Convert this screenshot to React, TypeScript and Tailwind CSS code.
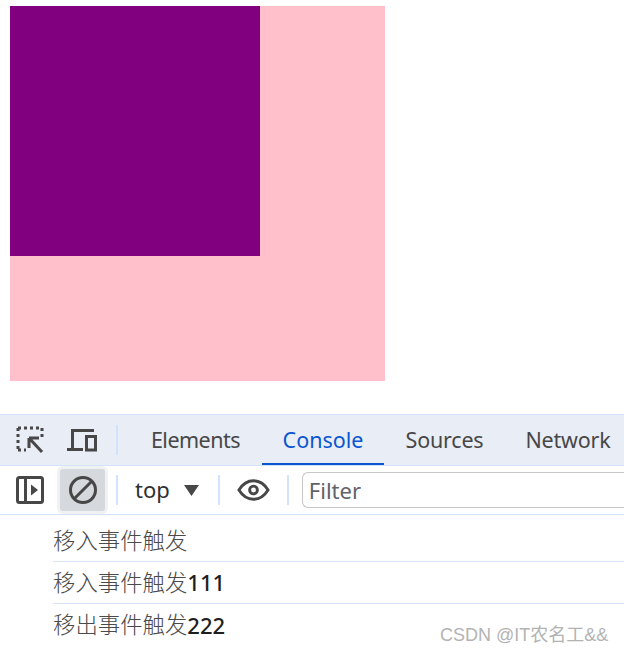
const sans = { fontFamily: '"Noto Sans", "Noto Sans CJK SC", sans-serif' };

function Divider() {
  return <div className="w-[2px] h-[30px] bg-[#d3e3fd] shrink-0" />;
}

function Tab({ label, size, active }: { label: string; size: string; active?: boolean }) {
  return (
    <div
      className={
        'h-full flex items-center justify-center shrink-0 whitespace-nowrap text-[21.5px] ' +
        size +
        (active ? ' text-[#0b57d0] border-b-2 border-[#0b57d0] pt-[2px]' : ' text-[#474747]')
      }
    >
      {label}
    </div>
  );
}

function LogRow({ text, num, last }: { text: string; num?: string; last?: boolean }) {
  return (
    <div className={'h-[42px] flex items-center ' + (last ? '' : 'border-b border-[#d6e2f8]')}>
      <span className="text-[22.4px] font-light text-[#4a4a4a]">{text}</span>
      {num && <span className="text-[22px] text-[#1f1f1f] font-medium">{num}</span>}
    </div>
  );
}

export default function App() {
  return (
    <div className="relative w-[624px] h-[653px] bg-white overflow-hidden" style={sans}>
      <div className="pt-[6px] pl-[10px] h-[414px]">
        <div className="w-[375px] h-[375px] bg-[#ffc0cb]">
          <div className="w-[250px] h-[250px] bg-[#800080]" />
        </div>
      </div>

      <div className="h-[52px] bg-[#e9edf6] border-y border-[#d3e3fd] flex items-center">
        <div className="w-[60px] flex justify-center shrink-0">
          <svg width="28" height="28" viewBox="0 0 28 28" fill="none" stroke="#474747">
            <path d="M2 2h24M2 2v22M26 2v11M2 24h8" strokeWidth="3" strokeDasharray="3 3" />
            <path d="M13 12h10M13 12v10M13 12l13 14" strokeWidth="3" />
          </svg>
        </div>
        <div className="w-[44px] flex justify-center shrink-0">
          <svg width="30" height="24" viewBox="0 0 30 24" fill="none" stroke="#474747" strokeWidth="3">
            <path d="M27 2.500H5.500V21" />
            <path d="M0 21.500h16" />
            <rect x="19.500" y="8.500" width="9" height="13.500" />
          </svg>
        </div>
        <div className="ml-[12px] mr-[11px]">
          <Divider />
        </div>
        <Tab label="Elements" size="w-[133px] tracking-[-0.5px]" />
        <Tab label="Console" size="w-[122px]" active />
        <Tab label="Sources" size="w-[121px] tracking-[-0.2px]" />
        <Tab label="Network" size="w-[126px] tracking-[-0.2px]" />
      </div>

      <div className="h-[49px] border-b border-[#d3e3fd] flex items-center">
        <div className="w-[57px] flex justify-center pl-[3px] shrink-0">
          <svg width="28" height="28" viewBox="0 0 28 28" fill="none">
            <rect x="1.500" y="1.500" width="25" height="25" rx="2" stroke="#474747" strokeWidth="3" />
            <path d="M9.500 2v24" stroke="#474747" strokeWidth="3" />
            <path d="M15 8.500l7 5.500-7 5.500z" fill="#474747" />
          </svg>
        </div>
        <div className="ml-[3px] w-[45px] h-[42px] rounded-[3px] bg-[#d5d8dc] ring-[3px] ring-[#f0f1f3] flex items-center justify-center shrink-0">
          <svg width="30" height="30" viewBox="0 0 30 30" fill="none" stroke="#474747" strokeWidth="3">
            <circle cx="15" cy="15" r="12.500" />
            <path d="M6 24L24 6" />
          </svg>
        </div>
        <div className="ml-[11px]">
          <Divider />
        </div>
        <span className="ml-[17px] text-[22px] text-[#303030] leading-none pb-[3px]">top</span>
        <svg className="ml-[14px]" width="15" height="11" viewBox="0 0 15 11" fill="#474747">
          <path d="M0 0h15L7.500 11z" />
        </svg>
        <div className="ml-[19px]">
          <Divider />
        </div>
        <div className="w-[67px] flex justify-center shrink-0">
          <svg width="33" height="24" viewBox="0 0 34 24" fill="none" stroke="#474747" strokeWidth="3">
            <path d="M2 12C6 5.500 11 2.500 17 2.500S28 5.500 32 12c-4 6.500-9 9.500-15 9.500S6 18.500 2 12z" />
            <circle cx="17" cy="12" r="4" />
          </svg>
        </div>
        <Divider />
        <div className="ml-[13px] flex-1 h-[36px] border border-[#c4c7c5] border-r-0 rounded-l-[6px] flex items-center pl-[6px] text-[22px] text-[#5f6368]">
          Filter
        </div>
      </div>

      <div className="ml-[53px] pt-[5px]">
        <LogRow text="移入事件触发" />
        <LogRow text="移入事件触发" num="111" />
        <LogRow text="移出事件触发" num="222" last />
      </div>

      <div
        className="absolute left-[440px] top-[624px] text-[18px] leading-[22px] text-[#b3b3b3] whitespace-nowrap"
        style={{ fontFamily: '"Liberation Sans", "Noto Sans CJK SC", sans-serif' }}
      >
        CSDN @IT农名工&amp;&amp;
      </div>
    </div>
  );
}
